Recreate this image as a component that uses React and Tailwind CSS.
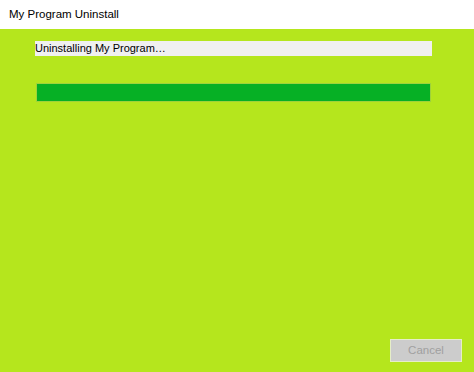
import React from "react";

const App = () => {
  return (
    <div
      className="w-[474px] h-[372px] flex flex-col bg-[#b5e61d] overflow-hidden"
      style={{ fontFamily: '"Liberation Sans", Arial, sans-serif' }}
    >
      {/* Title bar */}
      <div className="h-[29px] bg-white flex items-center pl-[9px] text-[11.5px] text-black">
        My Program Uninstall
      </div>

      {/* Body */}
      <div className="flex-1 flex flex-col pl-[35px] pr-[42px] pt-[12px]">
        <div className="h-[15px] bg-[#f0f0f0] flex items-center text-[11px] text-black leading-none">
          Uninstalling My Program…
        </div>
        <div className="mt-[27px] ml-[1px] mr-[1px] h-[19px] bg-[#06b025] border border-[#9ed23b]" />

        <div className="flex-1" />

        {/* Footer */}
        <div className="flex justify-end -mr-[30px] pb-[10px]">
          <button
            disabled
            className="w-[72px] h-[23px] bg-[#cccccc] border border-[#e6eec8] text-[11.5px] text-[#a0a0a0]"
          >
            Cancel
          </button>
        </div>
      </div>
    </div>
  );
};

export default App;
